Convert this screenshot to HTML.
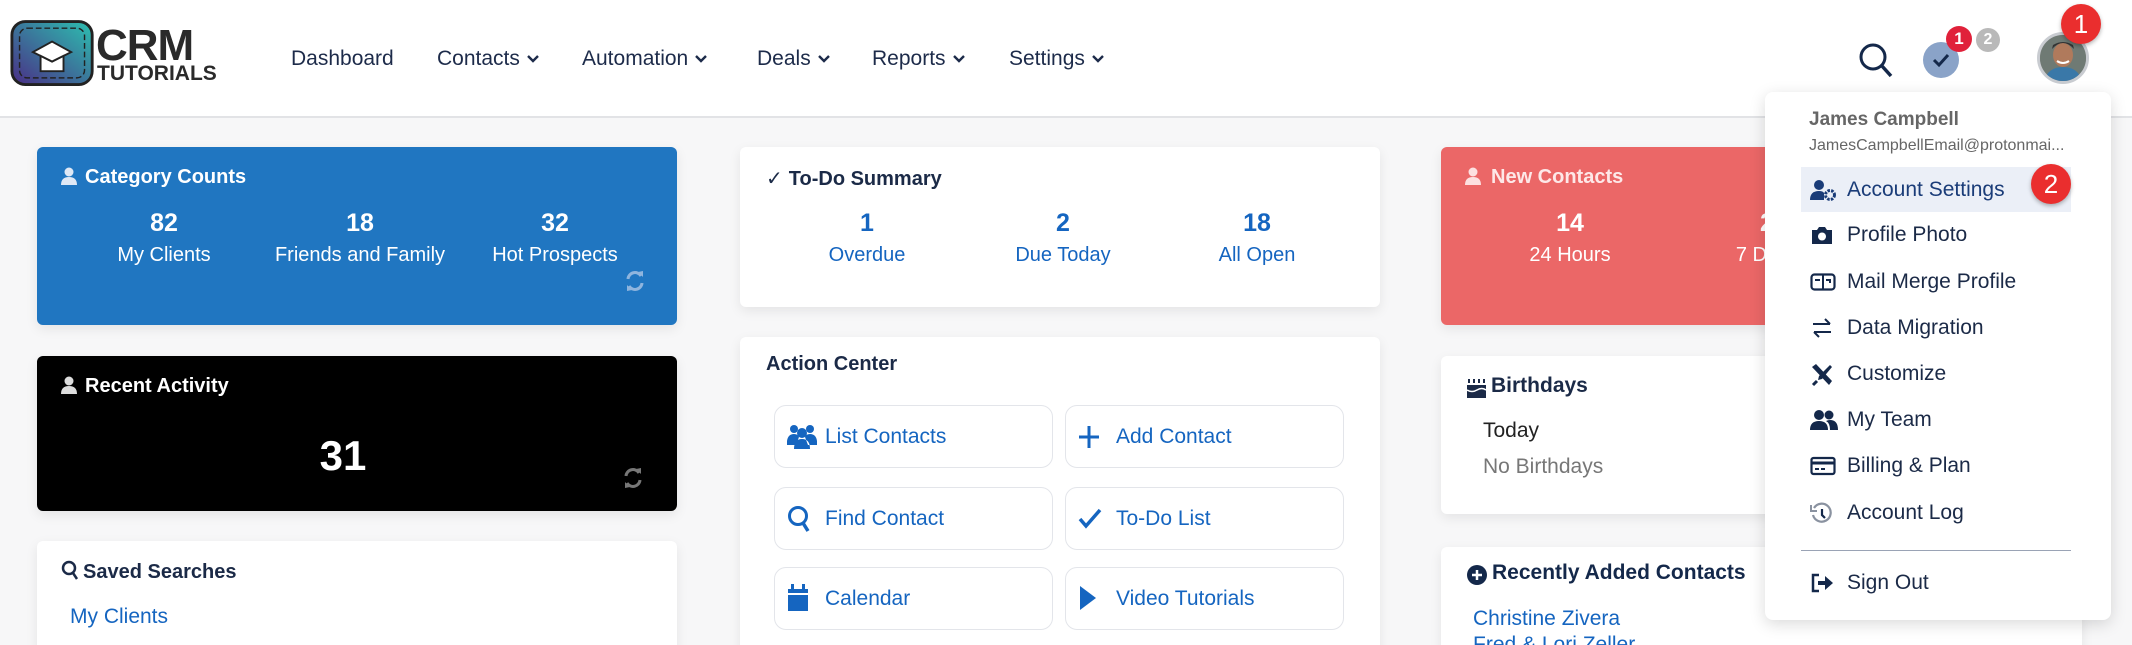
<!DOCTYPE html>
<html><head><meta charset="utf-8"><style>
*{box-sizing:border-box;margin:0;padding:0}
html,body{width:2132px;height:645px;overflow:hidden}
body{background:#f7f7f8;font-family:"Liberation Sans",sans-serif;color:#1b2a47}
#wrap{position:relative;width:2132px;height:645px;overflow:hidden;background:#f7f7f8}
.abs{position:absolute}
.hdr{left:0;top:0;width:2132px;height:118px;background:#fff;border-bottom:2px solid #e2e3e6}
.nav{top:47px;font-size:21px;color:#1d2b4a}
.nav svg{vertical-align:middle;margin-left:6px}
.card{position:absolute;border-radius:6px;box-shadow:0 4px 12px rgba(0,0,0,.08);background:#fff;overflow:hidden}
.ttl{position:absolute;left:26px;top:19px;font-size:20px;font-weight:bold;white-space:nowrap}
.stat{position:absolute;text-align:center;width:200px;font-size:20px}
.stat b{display:block;font-size:25px;margin-bottom:6px}
.btn{position:absolute;width:279px;height:63px;border:1px solid #e3e5ea;border-radius:12px;background:#fff;font-size:21px;color:#1565c0;padding-left:50px;line-height:61px}
.btn svg{position:absolute;left:12px;top:19px}
.menu{left:1765px;top:92px;width:346px;height:528px;background:#fff;border-radius:8px;box-shadow:0 4px 16px rgba(0,0,0,.15)}
.mi{position:absolute;left:0;font-size:21px;color:#1b2a47;height:30px;line-height:30px;padding-left:82px;white-space:nowrap}
.mi svg{position:absolute;left:45px;top:4px}
.badge{position:absolute;border-radius:50%;color:#fff;text-align:center;font-weight:bold}
</style></head><body><div id="wrap">
<div class="abs hdr"></div>
<svg class="abs" style="left:10px;top:18px" width="86" height="72" viewBox="0 0 90 72">
<defs><linearGradient id="g" x1="0" y1="1" x2="1" y2="0"><stop offset="0" stop-color="#4a2d86"/><stop offset="1" stop-color="#2cc0b0"/></linearGradient></defs>
<rect x="2" y="2" width="84" height="66" rx="14" fill="url(#g)" stroke="#222" stroke-width="3"/>
<rect x="10" y="9" width="68" height="52" rx="8" fill="none" stroke="#222" stroke-width="1.5" stroke-dasharray="6 3"/>
<path d="M24 34 L44 23 L64 34 L44 44 Z" fill="#fff" stroke="#222" stroke-width="2"/>
<path d="M32 38 V54 H56 V38 L44 44 Z" fill="#fff" stroke="#222" stroke-width="2"/>
</svg>
<div class="abs" style="left:96px;top:24px;font-size:44px;font-weight:900;color:#2a2a2a;letter-spacing:-1px;line-height:44px">CRM</div>
<div class="abs" style="left:97px;top:63px;font-size:21px;font-weight:bold;color:#2a2a2a;line-height:22px">TUTORIALS</div>

<div class="abs nav" style="left:291px">Dashboard</div>
<div class="abs nav" style="left:437px">Contacts<svg width="14" height="10" viewBox="0 0 14 10"><path d="M2 2l5 5 5-5" stroke="#1d2b4a" stroke-width="2.4" fill="none"/></svg></div>
<div class="abs nav" style="left:582px">Automation<svg width="14" height="10" viewBox="0 0 14 10"><path d="M2 2l5 5 5-5" stroke="#1d2b4a" stroke-width="2.4" fill="none"/></svg></div>
<div class="abs nav" style="left:757px">Deals<svg width="14" height="10" viewBox="0 0 14 10"><path d="M2 2l5 5 5-5" stroke="#1d2b4a" stroke-width="2.4" fill="none"/></svg></div>
<div class="abs nav" style="left:872px">Reports<svg width="14" height="10" viewBox="0 0 14 10"><path d="M2 2l5 5 5-5" stroke="#1d2b4a" stroke-width="2.4" fill="none"/></svg></div>
<div class="abs nav" style="left:1009px">Settings<svg width="14" height="10" viewBox="0 0 14 10"><path d="M2 2l5 5 5-5" stroke="#1d2b4a" stroke-width="2.4" fill="none"/></svg></div>

<svg class="abs" style="left:1858px;top:42px" width="36" height="38" viewBox="0 0 36 38"><circle cx="15" cy="15" r="12" stroke="#14284a" stroke-width="3" fill="none"/><path d="M24 24l9 10" stroke="#14284a" stroke-width="3.5"/></svg>
<div class="badge" style="left:1923px;top:42px;width:36px;height:36px;background:#8aa3c8"></div>
<svg class="abs" style="left:1931px;top:52px" width="20" height="16" viewBox="0 0 20 16"><path d="M3 8l5 5 9-10" stroke="#14284a" stroke-width="3" fill="none"/></svg>
<div class="badge" style="left:1946px;top:26px;width:26px;height:26px;background:#e0213a;font-size:17px;line-height:26px">1</div>
<div class="badge" style="left:1976px;top:28px;width:24px;height:24px;background:#b9b9b9;font-size:16px;line-height:24px">2</div>
<div class="badge" style="left:2037px;top:32px;width:52px;height:52px;background:#8d8f8c;border:3px solid #c9ccd1"></div>
<svg class="abs" style="left:2040px;top:35px" width="46" height="46" viewBox="0 0 46 46"><defs><clipPath id="c"><circle cx="23" cy="23" r="23"/></clipPath></defs><g clip-path="url(#c)"><rect width="46" height="46" fill="#6f7a74"/><ellipse cx="23" cy="20" rx="10" ry="12" fill="#b07a5c"/><path d="M12 14 Q23 2 34 14 L33 10 Q23 4 13 10Z" fill="#333"/><path d="M4 46 Q8 32 23 32 Q38 32 42 46Z" fill="#3a78a8"/><path d="M17 26 Q23 30 29 26" stroke="#fff" stroke-width="2" fill="none"/></g></svg>
<div class="badge" style="left:2061px;top:4px;width:40px;height:40px;background:#ea2e2e;font-size:26px;line-height:40px;font-weight:normal;box-shadow:0 2px 4px rgba(0,0,0,.3)">1</div>

<div class="card" style="left:37px;top:147px;width:640px;height:178px;background:#2076c1;color:#fff">
<div class="ttl" style="left:24px"><svg width="16" height="18" viewBox="0 0 16 18" style="vertical-align:-2px;margin-right:8px"><circle cx="8" cy="5" r="4.5" fill="#dfe8f5"/><path d="M0 18 Q0 10 8 10 Q16 10 16 18Z" fill="#dfe8f5"/></svg>Category Counts</div>
<div class="stat" style="left:27px;top:62px"><b>82</b>My Clients</div>
<div class="stat" style="left:223px;top:62px"><b>18</b>Friends and Family</div>
<div class="stat" style="left:418px;top:62px"><b>32</b>Hot Prospects</div>
<svg class="abs" style="left:587px;top:122px" width="22" height="24" viewBox="0 0 22 24"><path d="M4 10 A7 7 0 0 1 17 7 M18 14 A7 7 0 0 1 5 17" stroke="#8fb5de" stroke-width="3" fill="none"/><path d="M14 3 L19 8 L19 2Z M8 21 L3 16 L3 22Z" fill="#8fb5de"/></svg>
</div>
<div class="card" style="left:740px;top:147px;width:640px;height:160px">
<div class="ttl"><span style="font-weight:normal;margin-right:6px">✓</span>To-Do Summary</div>
<div class="stat" style="left:27px;top:62px;color:#1565c0"><b>1</b>Overdue</div>
<div class="stat" style="left:223px;top:62px;color:#1565c0"><b>2</b>Due Today</div>
<div class="stat" style="left:417px;top:62px;color:#1565c0"><b>18</b>All Open</div>
</div>
<div class="card" style="left:1441px;top:147px;width:641px;height:178px;background:#eb6767;color:#fff">
<div class="ttl" style="left:24px;color:#fde8e8"><svg width="16" height="18" viewBox="0 0 16 18" style="vertical-align:-2px;margin-right:10px"><circle cx="8" cy="5" r="4.5" fill="#fde0e0"/><path d="M0 18 Q0 10 8 10 Q16 10 16 18Z" fill="#fde0e0"/></svg>New Contacts</div>
<div class="stat" style="left:29px;top:62px"><b>14</b>24 Hours</div>
<div class="stat" style="left:226px;top:62px"><b>2</b>7 Days</div>
</div>
<div class="card" style="left:37px;top:356px;width:640px;height:155px;background:#000;color:#fff">
<div class="ttl" style="left:24px"><svg width="16" height="18" viewBox="0 0 16 18" style="vertical-align:-2px;margin-right:8px"><circle cx="8" cy="5" r="4.5" fill="#ddd"/><path d="M0 18 Q0 10 8 10 Q16 10 16 18Z" fill="#ddd"/></svg>Recent Activity</div>
<div class="abs" style="left:0;width:612px;text-align:center;top:76px;font-size:42px;font-weight:bold">31</div>
<svg class="abs" style="left:585px;top:110px" width="22" height="24" viewBox="0 0 22 24"><path d="M4 10 A7 7 0 0 1 17 7 M18 14 A7 7 0 0 1 5 17" stroke="#777" stroke-width="3" fill="none"/><path d="M14 3 L19 8 L19 2Z M8 21 L3 16 L3 22Z" fill="#777"/></svg>
</div>
<div class="card" style="left:37px;top:541px;width:640px;height:110px">
<div class="ttl" style="left:24px"><svg width="18" height="22" viewBox="0 0 18 22" style="vertical-align:-4px;margin-right:4px"><circle cx="8" cy="8" r="6" stroke="#1b2a47" stroke-width="2.5" fill="none"/><path d="M12 13l4 6" stroke="#1b2a47" stroke-width="2.5"/></svg>Saved Searches</div>
<div class="abs" style="left:33px;top:64px;font-size:21px;color:#1565c0">My Clients</div>
</div>
<div class="card" style="left:740px;top:337px;width:640px;height:320px">
<div class="ttl" style="top:16px">Action Center</div>
</div>
<div class="btn" style="left:774px;top:405px"><svg width="30" height="26" viewBox="0 0 30 26" style="top:17px;left:12px"><circle cx="7" cy="6" r="4" fill="#1565c0"/><circle cx="23" cy="6" r="4" fill="#1565c0"/><circle cx="15" cy="10" r="5" fill="#1565c0"/><path d="M0 18 Q1 11 7 11 Q11 11 12 14 L9 22 H0Z M30 18 Q29 11 23 11 Q19 11 18 14 L21 22 H30Z M7 26 Q7 16 15 16 Q23 16 23 26Z" fill="#1565c0"/></svg>List Contacts</div>
<div class="btn" style="left:1065px;top:405px"><svg width="22" height="24" viewBox="0 0 22 24"><path d="M11 1V23M1 12H21" stroke="#1565c0" stroke-width="3"/></svg>Add Contact</div>
<div class="btn" style="left:774px;top:487px"><svg width="24" height="28" viewBox="0 0 24 28" style="top:17px"><circle cx="11" cy="11" r="8.5" stroke="#1565c0" stroke-width="3" fill="none"/><path d="M16 18l5 8" stroke="#1565c0" stroke-width="3.5"/></svg>Find Contact</div>
<div class="btn" style="left:1065px;top:487px"><svg width="24" height="24" viewBox="0 0 24 24"><path d="M2 12l6 7L22 3" stroke="#1565c0" stroke-width="3.5" fill="none"/></svg>To-Do List</div>
<div class="btn" style="left:774px;top:567px"><svg width="22" height="28" viewBox="0 0 22 28" style="top:15px"><rect x="1" y="6" width="20" height="22" fill="#1565c0"/><rect x="4" y="1" width="3" height="6" fill="#1565c0"/><rect x="15" y="1" width="3" height="6" fill="#1565c0"/><rect x="1" y="10" width="20" height="2" fill="#fff"/></svg>Calendar</div>
<div class="btn" style="left:1065px;top:567px"><svg width="20" height="26" viewBox="0 0 20 26" style="top:17px"><path d="M2 1L18 13L2 25Z" fill="#1565c0"/></svg>Video Tutorials</div>
<div class="card" style="left:1441px;top:356px;width:641px;height:158px">
<svg class="abs" style="left:26px;top:22px" width="20" height="20" viewBox="0 0 20 20"><path d="M2 1v4M7 1v4M12 1v4M17 1v4" stroke="#1b2a47" stroke-width="2"/><rect x="0" y="7" width="19" height="13" fill="#1b2a47"/><path d="M0 12 Q5 15 10 12 Q15 9 19 12" stroke="#fff" stroke-width="1.5" fill="none"/></svg>
<div class="abs" style="left:50px;top:18px;font-size:21px;font-weight:bold;color:#1b2a47">Birthdays</div>
<div class="abs" style="left:42px;top:63px;font-size:21px;color:#222">Today</div>
<div class="abs" style="left:42px;top:99px;font-size:21px;color:#777">No Birthdays</div>
</div>
<div class="card" style="left:1441px;top:547px;width:641px;height:110px">
<svg class="abs" style="left:25px;top:17px" width="22" height="22" viewBox="0 0 22 22"><circle cx="11" cy="11" r="10" fill="#14284a"/><path d="M11 6v10M6 11h10" stroke="#fff" stroke-width="2.5"/></svg>
<div class="abs" style="left:51px;top:14px;font-size:21px;font-weight:bold;color:#14284a">Recently Added Contacts</div>
<div class="abs" style="left:32px;top:60px;font-size:21px;color:#1565c0">Christine Zivera</div>
<div class="abs" style="left:32px;top:86px;font-size:21px;color:#1565c0">Fred &amp; Lori Zeller</div>
</div>
<div class="abs menu">
<div class="abs" style="left:44px;top:17px;font-size:19px;font-weight:bold;color:#666">James Campbell</div>
<div class="abs" style="left:44px;top:45px;font-size:16px;color:#666">JamesCampbellEmail@protonmai...</div>
<div class="abs" style="left:36px;top:75px;width:270px;height:45px;background:#ebeff7"></div>
<div class="mi" style="top:83px;color:#1a3c78"><svg width="26" height="22" viewBox="0 0 26 22"><circle cx="9" cy="6" r="5" fill="#1a3c78"/><path d="M0 21 Q0 12 9 12 Q13 12 14 14 V21Z" fill="#1a3c78"/><circle cx="20" cy="16" r="4.5" fill="none" stroke="#1a3c78" stroke-width="3" stroke-dasharray="2.5 1.2"/></svg>Account Settings</div>
<div class="badge" style="left:266px;top:72px;width:40px;height:40px;background:#ea2e2e;font-size:26px;line-height:40px;font-weight:normal;box-shadow:0 2px 4px rgba(0,0,0,.3)">2</div>
<div class="mi" style="top:128px"><svg width="24" height="22" viewBox="0 0 24 22"><path d="M2 6h5l2-3h6l2 3h5v14H2Z" fill="#14284a"/><circle cx="12" cy="12.5" r="4" fill="#fff"/></svg>Profile Photo</div>
<div class="mi" style="top:175px"><svg width="26" height="22" viewBox="0 0 26 22"><rect x="1.5" y="3.5" width="23" height="15" rx="3" stroke="#14284a" stroke-width="2.2" fill="none"/><path d="M13 4v14M5 9h5M16 9h4v3" stroke="#14284a" stroke-width="2" fill="none"/></svg>Mail Merge Profile</div>
<div class="mi" style="top:221px"><svg width="24" height="22" viewBox="0 0 24 22"><path d="M3 7h17M15 2l5 5M21 15H4M9 20l-5-5" stroke="#14284a" stroke-width="2" fill="none"/></svg>Data Migration</div>
<div class="mi" style="top:267px"><svg width="24" height="24" viewBox="0 0 24 24"><path d="M2 4l4-3 16 17-3 4Z" fill="#14284a"/><path d="M20 2l2 2-10 12-4 1 1-4Z" fill="#14284a"/><path d="M3 22l4-4" stroke="#14284a" stroke-width="3"/></svg>Customize</div>
<div class="mi" style="top:313px"><svg width="28" height="22" viewBox="0 0 28 22"><circle cx="9" cy="6" r="5" fill="#14284a"/><circle cx="19" cy="6" r="4.5" fill="#14284a"/><path d="M0 21 Q0 12 9 12 Q18 12 18 21Z M20 21 Q20 14 16 12 Q18 11 20 11 Q28 11 28 21Z" fill="#14284a"/></svg>My Team</div>
<div class="mi" style="top:359px"><svg width="26" height="22" viewBox="0 0 26 22"><rect x="1.5" y="3" width="23" height="16" rx="2" stroke="#14284a" stroke-width="2.2" fill="none"/><path d="M2 8h22" stroke="#14284a" stroke-width="3"/><path d="M5 14h4M11 14h4" stroke="#14284a" stroke-width="2"/></svg>Billing &amp; Plan</div>
<div class="mi" style="top:406px"><svg width="24" height="24" viewBox="0 0 24 24"><path d="M4 6 A9 9 0 1 1 3 13" stroke="#8a92a0" stroke-width="2.2" fill="none"/><path d="M1 3v6h6" stroke="#8a92a0" stroke-width="2" fill="none"/><path d="M12 7v6l3 3" stroke="#14284a" stroke-width="2.2" fill="none"/></svg>Account Log</div>
<div class="abs" style="left:36px;top:458px;width:270px;height:1px;background:#9aa3b5"></div>
<div class="mi" style="top:476px"><svg width="24" height="22" viewBox="0 0 24 22"><path d="M9 3H3v16h6" stroke="#14284a" stroke-width="2.5" fill="none"/><path d="M8 9h7V4l8 7-8 7v-5H8Z" fill="#14284a"/></svg>Sign Out</div>
</div>
</div></body></html>
